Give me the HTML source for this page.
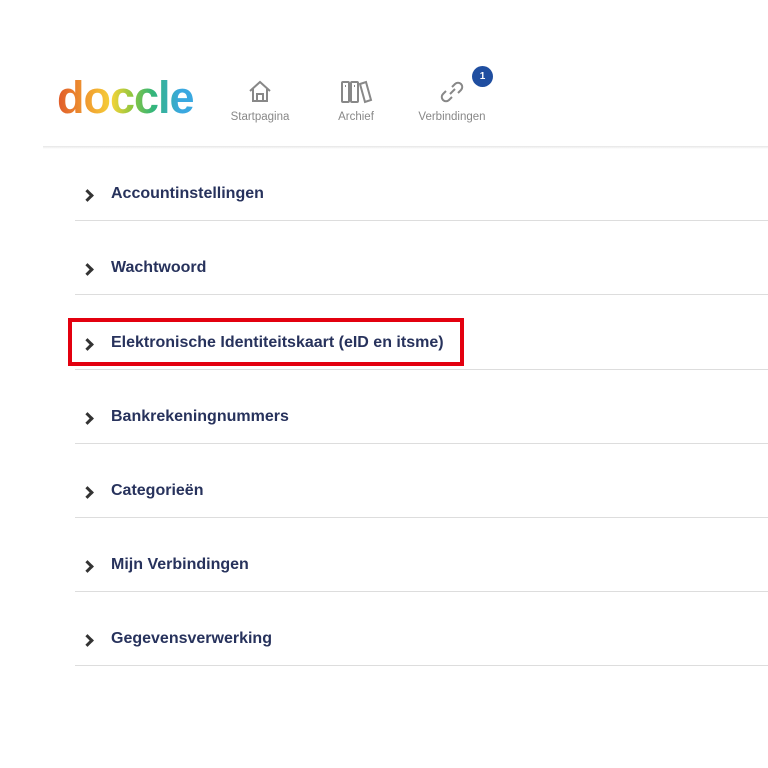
<!DOCTYPE html>
<html><head><meta charset="utf-8"><style>
body{margin:0;width:768px;height:768px;background:#fff;font-family:"Liberation Sans",sans-serif;position:relative;overflow:hidden}
.logo{position:absolute;left:57px;top:72px;font-size:45px;font-weight:bold;letter-spacing:-1px;background:linear-gradient(90deg,#e0592a,#f2a531 25%,#f5d33a 40%,#8cc63f 55%,#34b67a 70%,#3aa8e0 90%);-webkit-background-clip:text;background-clip:text;color:transparent}
.nav{position:absolute;top:79px;text-align:center;font-size:11.5px;color:#888}
.nav svg{display:block;margin:0 auto 6px}
.hdr{position:absolute;left:43px;right:0;top:146px;height:3px;background:linear-gradient(#e6e6e6,#fff)}
.row{position:absolute;left:75px;right:0;height:74px;border-bottom:1px solid #ddd}
.row span{position:absolute;left:36px;top:14px;font-size:16px;font-weight:bold;color:#27325c}
.row i{position:absolute;left:8px;top:19px;width:6px;height:6px;border-right:3px solid #333;border-top:3px solid #333;transform:rotate(45deg)}
.badge{position:absolute;left:472px;top:66px;width:21px;height:21px;border-radius:50%;background:#1f4ea0;color:#fff;font-size:10px;font-weight:bold;text-align:center;line-height:21px}
.red{position:absolute;left:68px;top:318px;width:388px;height:40px;border:4px solid #e3000f}
</style></head><body>
<div class="logo">doccle</div>
<div class="nav" style="left:228px;width:64px"><svg width="26" height="26" viewBox="0 0 26 26" fill="none" stroke="#888" stroke-width="2"><path d="M3 12L13 3l10 9M6 10v12h14V10M10 22v-7h6v7"/></svg>Startpagina</div>
<div class="nav" style="left:330px;width:52px"><svg width="34" height="26" viewBox="0 0 34 26" fill="none" stroke="#888" stroke-width="2"><rect x="3" y="3" width="7" height="20" rx="1"/><rect x="12" y="3" width="7" height="20" rx="1"/><path d="M21 5l6-2 5 18-6 2z"/><path d="M6 7h1M15 7h1"/></svg>Archief</div>
<div class="nav" style="left:414px;width:76px"><svg width="26" height="26" viewBox="0 0 26 26" fill="none" stroke="#888" stroke-width="2"><path d="M11 15l5-5M13 8l3-3a4 4 0 016 6l-3 3M13 18l-3 3a4 4 0 01-6-6l3-3"/></svg>Verbindingen</div>
<div class="badge">1</div>
<div class="hdr"></div>
<div class="row" style="top:146px"><i style="top:45px"></i><span style="top:39px">Accountinstellingen</span></div>
<div class="row" style="top:220px"><i style="top:45px"></i><span style="top:39px">Wachtwoord</span></div>
<div class="row" style="top:295px"><i style="top:45px"></i><span style="top:39px">Elektronische Identiteitskaart (eID en itsme)</span></div>
<div class="row" style="top:369px"><i style="top:45px"></i><span style="top:39px">Bankrekeningnummers</span></div>
<div class="row" style="top:443px"><i style="top:45px"></i><span style="top:39px">Categorieën</span></div>
<div class="row" style="top:517px"><i style="top:45px"></i><span style="top:39px">Mijn Verbindingen</span></div>
<div class="row" style="top:591px"><i style="top:45px"></i><span style="top:39px">Gegevensverwerking</span></div>
<div class="red"></div>
</body></html>
